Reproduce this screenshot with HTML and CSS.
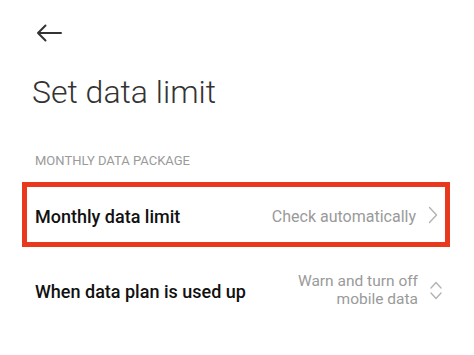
FILE: index.html
```html
<!DOCTYPE html>
<html lang="en">
<head>
<meta charset="utf-8">
<title>Set data limit</title>
<link rel="stylesheet" href="styles.css">
</head>
<body>
<div class="screen">
  <div class="topbar">
    <svg class="back" width="26" height="18" viewBox="0 0 26 18" aria-hidden="true">
      <path d="M25 9 H2 M9.5 1.5 L2 9 L9.5 16.5" fill="none" stroke="#333" stroke-width="2" stroke-linecap="round" stroke-linejoin="round"/>
    </svg>
  </div>
  <h1 class="title">Set data limit</h1>
  <div class="section-label">MONTHLY DATA PACKAGE</div>
  <div class="list">
    <div class="row row-highlight">
      <span class="row-label">Monthly data limit</span>
      <span class="row-value">
        <span class="value-text">Check automatically</span>
        <svg class="chev" width="10" height="18" viewBox="0 0 10 18" aria-hidden="true">
          <path d="M1.5 1.5 L8.5 9 L1.5 16.5" fill="none" stroke="#b3b3b3" stroke-width="1.4" stroke-linecap="round" stroke-linejoin="round"/>
        </svg>
      </span>
    </div>
    <div class="row row-plain">
      <span class="row-label">When data plan is used up</span>
      <span class="row-value">
        <span class="value-text multi">Warn and turn off<br>mobile data</span>
        <svg class="updown" width="12" height="21" viewBox="0 0 12 21" aria-hidden="true">
          <path d="M1 8 L6 2.5 L11 8 M1 13 L6 18.5 L11 13" fill="none" stroke="#b3b3b3" stroke-width="1.4" stroke-linecap="round" stroke-linejoin="round"/>
        </svg>
      </span>
    </div>
  </div>
</div>
</body>
</html>
```

FILE: styles.css
```css
* { box-sizing: border-box; }
html, body {
  margin: 0;
  padding: 0;
  background: #ffffff;
}
body {
  font-family: Roboto, "Noto Sans", "Liberation Sans", sans-serif;
  color: #222;
}
.screen {
  width: 474px;
  height: 355px;
  overflow: hidden;
}
.topbar {
  height: 72px;
  padding: 24px 0 0 36px;
}
.back { display: block; }
.title {
  margin: 0 0 0 32px;
  font-size: 32px;
  line-height: 40px;
  font-weight: 300;
  color: #333;
  letter-spacing: 0;
}
.section-label {
  margin: 41px 0 0 35px;
  font-size: 13px;
  line-height: 16px;
  color: #9a9a9a;
  font-weight: 400;
}
.list {
  margin: 13px 24px 0 22px;
}
.row {
  display: flex;
  align-items: center;
  justify-content: space-between;
  padding: 0 7px 0 8px;
  border: 5px solid transparent;
}
.row-highlight {
  height: 65px;
  border-color: #e8391f;
}
.row-plain {
  height: 84px;
  padding-top: 2px;
  padding-right: 3px;
}
.row-label {
  font-size: 18px;
  font-weight: 500;
  color: #111;
  padding-top: 3px;
}
.row-value {
  display: flex;
  align-items: center;
  gap: 12px;
}
.value-text {
  font-size: 16px;
  color: #9a9a9a;
  text-align: right;
  padding-top: 3px;
}
.value-text.multi {
  font-size: 15.5px;
  line-height: 18px;
  padding-top: 0;
}
.chev, .updown { display: block; }
```
